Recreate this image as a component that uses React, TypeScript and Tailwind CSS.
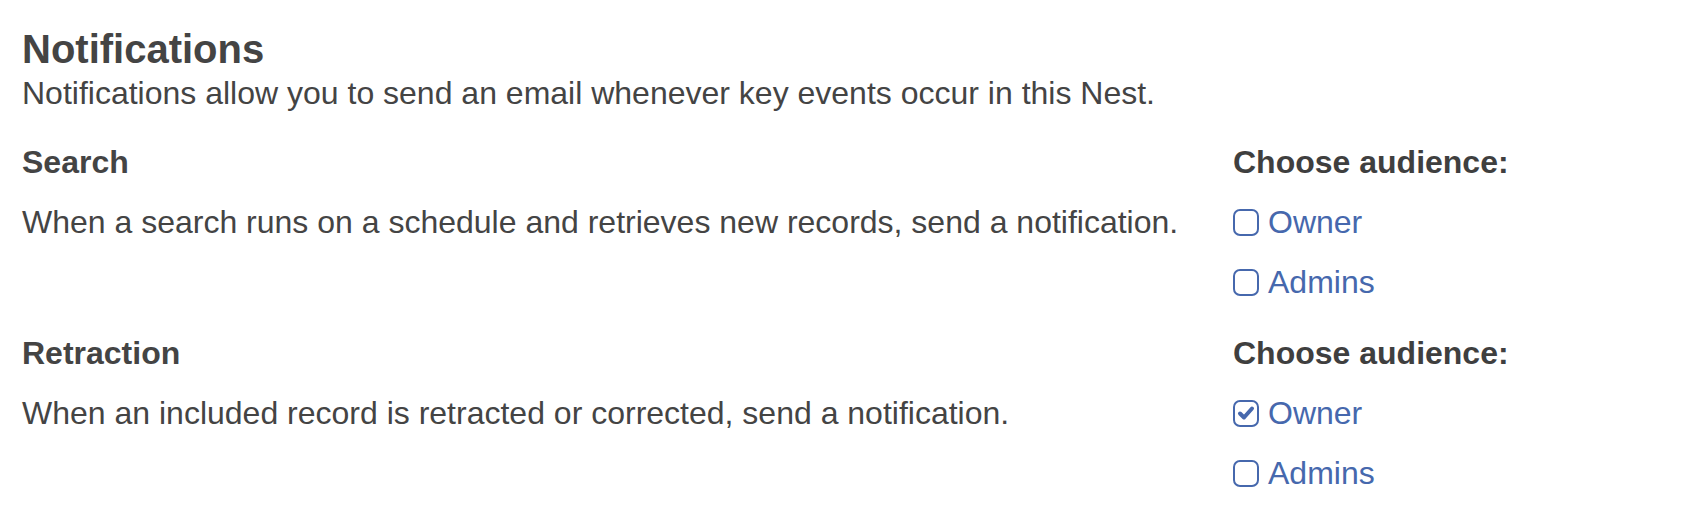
import { useState } from 'react';

type Audience = { owner: boolean; admins: boolean };

const sections = [
    {
        key: 'search',
        title: 'Search',
        description: 'When a search runs on a schedule and retrieves new records, send a notification.',
        initial: { owner: false, admins: false },
    },
    {
        key: 'retraction',
        title: 'Retraction',
        description: 'When an included record is retracted or corrected, send a notification.',
        initial: { owner: true, admins: false },
    },
];

function AudienceCheckbox({ label, checked, onChange }: { label: string; checked: boolean; onChange: () => void }) {
    return (
        <label className="flex items-center h-[60px] cursor-pointer text-[#4668ad]" onClick={onChange}>
            <span className="w-[26px] h-[27px] border-2 border-[#4668ad] rounded-[7px] flex items-center justify-center mr-[9px]">
                {checked && (
                    <svg width="20" height="20" viewBox="0 0 20 20" fill="none">
                        <path d="M4 10.5l4 4 8-9" stroke="#4668ad" strokeWidth="4" strokeLinecap="round" strokeLinejoin="round" />
                    </svg>
                )}
            </span>
            <span>{label}</span>
        </label>
    );
}

function NotificationSection({ title, description, initial }: { title: string; description: string; initial: Audience }) {
    const [audience, setAudience] = useState<Audience>(initial);

    return (
        <div className="grid grid-cols-[1211px_1fr] text-[32px] leading-[60px]">
            <div>
                <h3 className="font-bold">{title}</h3>
                <p>{description}</p>
            </div>
            <div>
                <div className="font-bold text-[#3f3f3f]">Choose audience:</div>
                <AudienceCheckbox label="Owner" checked={audience.owner} onChange={() => setAudience({ ...audience, owner: !audience.owner })} />
                <AudienceCheckbox label="Admins" checked={audience.admins} onChange={() => setAudience({ ...audience, admins: !audience.admins })} />
            </div>
        </div>
    );
}

export default function App() {
    return (
        <div className="min-h-screen bg-white text-[#444444] px-[22px] pt-[29px]" style={{ fontFamily: '"Liberation Sans", Arial, sans-serif' }}>
            {/* Header */}
            <h2 className="text-[40px] leading-[40px] font-bold">Notifications</h2>
            <p className="text-[32px] leading-[32px] mt-[8px]">
                Notifications allow you to send an email whenever key events occur in this Nest.
            </p>

            {/* Sections */}
            <div className="mt-[23px] flex flex-col gap-[11px]">
                {sections.map((s) => (
                    <NotificationSection key={s.key} title={s.title} description={s.description} initial={s.initial} />
                ))}
            </div>
        </div>
    );
}
